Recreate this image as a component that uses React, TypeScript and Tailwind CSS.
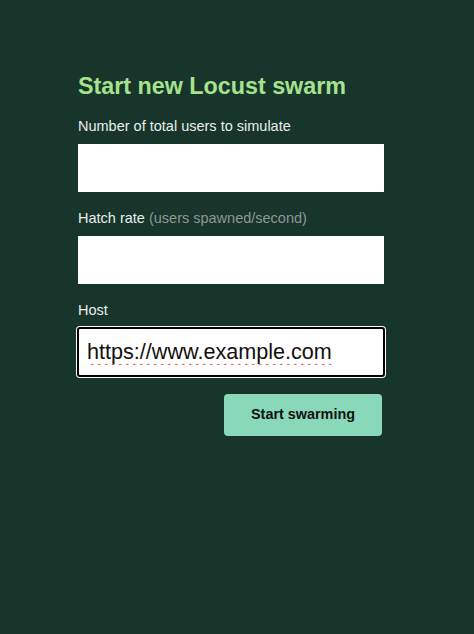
import { useState } from "react";

// Formulario de arranque del swarm de Locust

export default function App() {
  const [users, setUsers] = useState("");
  const [rate, setRate] = useState("");
  const [host, setHost] = useState("https://www.example.com");

  return (
    <div
      className="min-h-[634px] w-full bg-[#17352b]"
      style={{ fontFamily: '"Liberation Sans", Arial, sans-serif' }}
    >
      <form
        className="ml-[78px] w-[306px] pt-[71px]"
        onSubmit={e => e.preventDefault()}
      >
        <h2 className="text-[23.3px] leading-[30px] font-bold text-[#a6e28d] mb-[16px]">
          Start new Locust swarm
        </h2>

        <label className="block text-[14.5px] leading-[18px] text-[#e8eeea] mb-[9px]">
          Number of total users to simulate
        </label>
        <input
          type="text"
          value={users}
          onChange={e => setUsers(e.target.value)}
          className="block w-full h-[48px] bg-white outline-none px-2 text-[21.6px] text-black mb-[17px]"
        />

        <label className="block text-[14.5px] leading-[18px] text-[#e8eeea] mb-[9px]">
          Hatch rate <span className="text-[#8a9a92]">(users spawned/second)</span>
        </label>
        <input
          type="text"
          value={rate}
          onChange={e => setRate(e.target.value)}
          className="block w-full h-[48px] bg-white outline-none px-2 text-[21.6px] text-black mb-[17px]"
        />

        <label className="block text-[14.5px] leading-[18px] text-[#e8eeea] mb-[8px]">
          Host
        </label>
        <input
          type="text"
          value={host}
          onChange={e => setHost(e.target.value)}
          className="block w-[308px] -ml-px h-[50px] bg-white outline-none border-2 border-black rounded-[3px] ring-1 ring-white px-[8px] text-[21.6px] text-[#111] underline decoration-wavy decoration-[#e04040] decoration-1 underline-offset-4 mb-[17px]"
        />

        <div className="flex justify-end pr-[2px]">
          <button
            type="submit"
            className="w-[158px] h-[42px] rounded-[4px] bg-[#88d8b9] text-[14.4px] font-bold text-[#111]"
          >
            Start swarming
          </button>
        </div>
      </form>
    </div>
  );
}
